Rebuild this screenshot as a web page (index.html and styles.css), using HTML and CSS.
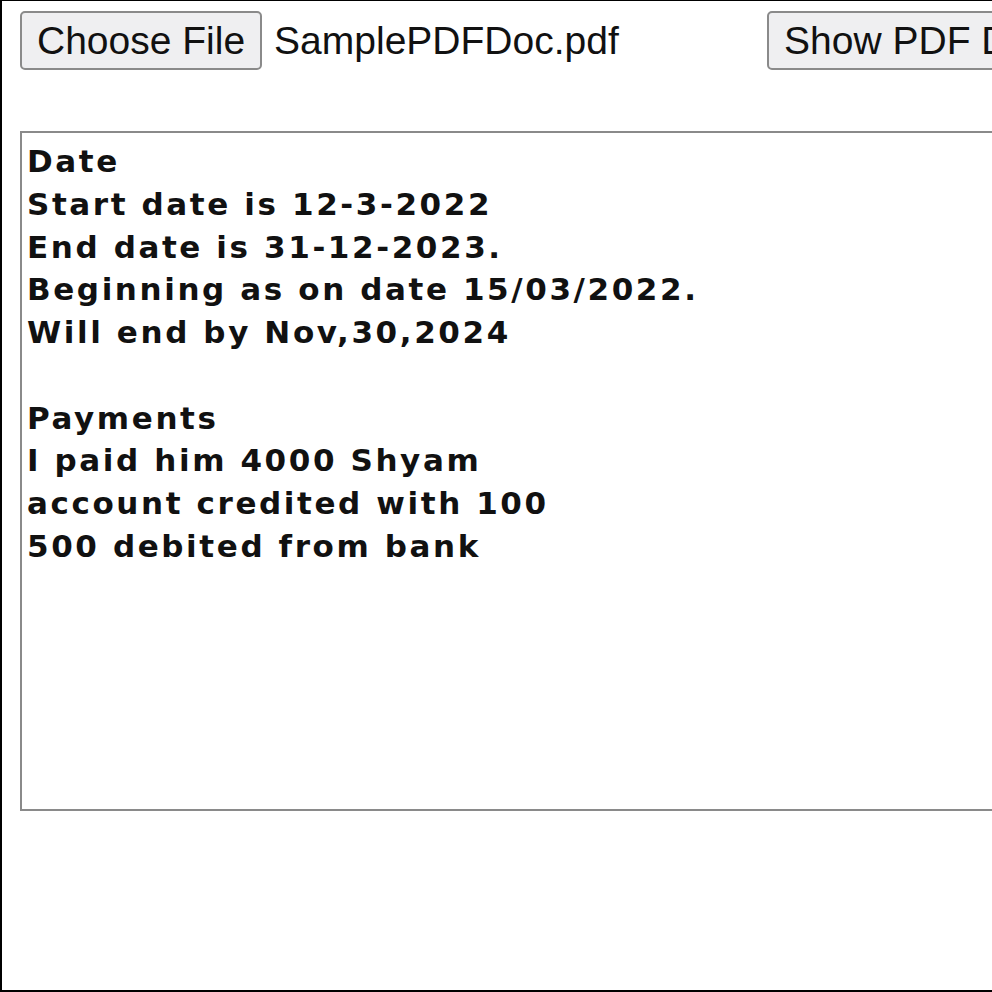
FILE: index.html
```html
<!DOCTYPE html>
<html>
<head>
<meta charset="utf-8">
<link rel="stylesheet" href="styles.css">
</head>
<body>
<div class="frame">
  <div class="toolbar">
    <button class="btn" type="button">Choose File</button>
    <span class="filename">SamplePDFDoc.pdf</span>
    <button class="btn btn-show" type="button">Show PDF Data</button>
  </div>
  <textarea class="output" readonly>Date
Start date is 12-3-2022
End date is 31-12-2023.
Beginning as on date 15/03/2022.
Will end by Nov,30,2024

Payments
I paid him 4000 Shyam
account credited with 100
500 debited from bank</textarea>
</div>
</body>
</html>
```
FILE: styles.css
```css
html, body {
  margin: 0;
  padding: 0;
  background: #fff;
}
.frame {
  box-sizing: border-box;
  width: 992px;
  height: 992px;
  border-top: 1px solid #000;
  border-left: 2px solid #000;
  border-bottom: 2px solid #000;
  overflow: hidden;
  padding: 10px 0 0 18px;
}
.toolbar {
  display: flex;
  align-items: center;
  white-space: nowrap;
}
.btn {
  box-sizing: border-box;
  height: 59px;
  margin: 0;
  padding: 0 15px;
  font-family: "Liberation Sans", Arial, sans-serif;
  font-size: 39px;
  color: #111;
  background: #efeff1;
  border: 2px solid #8a8a8a;
  border-radius: 5px;
  flex: none;
}
.filename {
  font-family: "Liberation Sans", Arial, sans-serif;
  font-size: 39px;
  color: #111;
  margin-left: 12px;
  width: 493px;
  flex: none;
}
.output {
  display: block;
  box-sizing: border-box;
  margin-top: 61px;
  width: 1100px;
  height: 680px;
  padding: 7px 5px;
  border: 2px solid #8a8a8a;
  border-radius: 0;
  resize: none;
  overflow: hidden;
  font-family: "DejaVu Sans", sans-serif;
  font-weight: bold;
  font-size: 31px;
  letter-spacing: 2.6px;
  line-height: 42.75px;
  color: #111;
  background: #fff;
}
```
